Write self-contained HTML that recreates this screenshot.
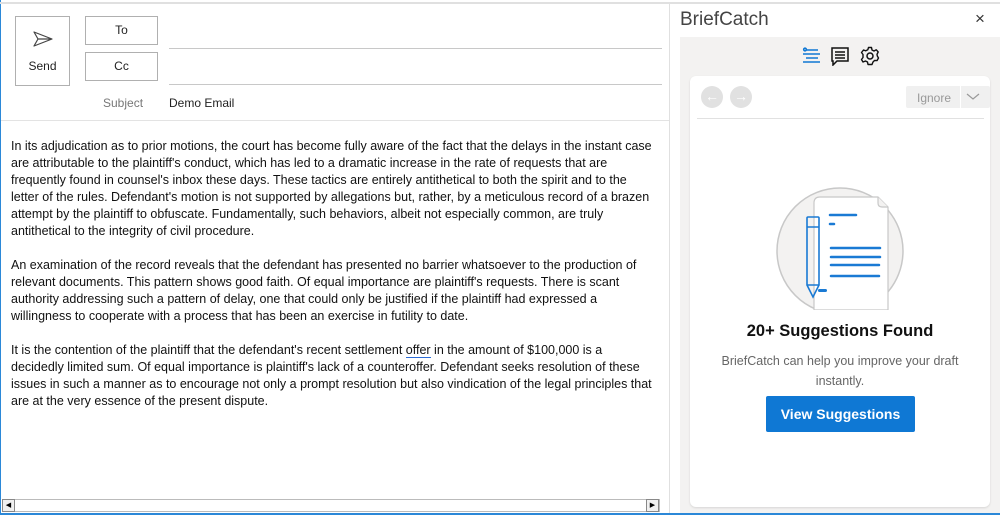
<!DOCTYPE html>
<html><head><style>
*{margin:0;padding:0;box-sizing:border-box}
body{width:1000px;height:515px;overflow:hidden;background:#fff;font-family:"Liberation Sans",sans-serif;position:relative}
.abs{position:absolute}
.btn{position:absolute;border:1px solid #b0b0b0;background:#fff;font-size:12px;color:#222;text-align:center}
.line{position:absolute;height:1px;background:#c8c8c8}
.body p{font-size:12.5px;line-height:17px;color:#111;margin-bottom:17px;white-space:nowrap}
</style></head><body>
<div class="abs" style="left:0;top:0;width:1px;height:515px;background:#2b88d8"></div>
<div class="abs" style="left:0;top:513px;width:1000px;height:2px;background:#2b88d8"></div>
<div class="abs" style="left:0;top:2px;width:1000px;height:2px;background:#e0e0e0"></div>

<div class="btn" style="left:15px;top:16px;width:55px;height:70px">
<svg class="abs" style="left:16px;top:13px" width="22" height="18" viewBox="0 0 22 18"><path d="M2 2 L20 9 L2 16 L6 9 Z M6 9 H20" fill="none" stroke="#444" stroke-width="1.2" stroke-linejoin="round"/></svg>
<div class="abs" style="left:0;width:53px;top:42px">Send</div></div>
<div class="btn" style="left:85px;top:16px;width:73px;height:29px;line-height:27px">To</div>
<div class="btn" style="left:85px;top:52px;width:73px;height:29px;line-height:27px">Cc</div>
<div class="line" style="left:169px;top:48px;width:493px"></div>
<div class="line" style="left:169px;top:84px;width:493px"></div>
<div class="abs" style="left:103px;top:96px;font-size:12px;color:#777">Subject</div>
<div class="abs" style="left:169px;top:96px;font-size:12px;color:#222">Demo Email</div>
<div class="line" style="left:1px;top:120px;width:668px;background:#e3e3e3"></div>

<div class="abs body" style="left:11px;top:138px;width:650px">
<p>In its adjudication as to prior motions, the court has become fully aware of the fact that the delays in the instant case<br>are attributable to the plaintiff's conduct, which has led to a dramatic increase in the rate of requests that are<br>frequently found in counsel's inbox these days. These tactics are entirely antithetical to both the spirit and to the<br>letter of the rules. Defendant's motion is not supported by allegations but, rather, by a meticulous record of a brazen<br>attempt by the plaintiff to obfuscate. Fundamentally, such behaviors, albeit not especially common, are truly<br>antithetical to the integrity of civil procedure.</p>
<p>An examination of the record reveals that the defendant has presented no barrier whatsoever to the production of<br>relevant documents. This pattern shows good faith. Of equal importance are plaintiff's requests. There is scant<br>authority addressing such a pattern of delay, one that could only be justified if the plaintiff had expressed a<br>willingness to cooperate with a process that has been an exercise in futility to date.</p>
<p>It is the contention of the plaintiff that the defendant's recent settlement <span style="border-bottom:1px solid #2b6cd8">offer</span> in the amount of $100,000 is a<br>decidedly limited sum. Of equal importance is plaintiff's lack of a counteroffer. Defendant seeks resolution of these<br>issues in such a manner as to encourage not only a prompt resolution but also vindication of the legal principles that<br>are at the very essence of the present dispute.</p>
</div>

<div class="abs" style="left:2px;top:499px;width:658px;height:13px;border:1px solid #bbb;background:#fff"></div>
<div class="abs" style="left:2px;top:499px;width:13px;height:13px;border:1px solid #888;background:#f0f0f0;font-size:7px;line-height:11px;text-align:center">◀</div>
<div class="abs" style="left:646px;top:499px;width:13px;height:13px;border:1px solid #888;background:#f0f0f0;font-size:7px;line-height:11px;text-align:center">▶</div>
<div class="abs" style="left:669px;top:4px;width:1px;height:509px;background:#e0e0e0"></div>

<div class="abs" style="left:680px;top:9px;font-size:19px;color:#444">BriefCatch</div>
<div class="abs" style="left:975px;top:9px;font-size:17px;color:#333">×</div>
<div class="abs" style="left:680px;top:37px;width:320px;height:476px;background:#f3f2f1"></div>
<svg class="abs" style="left:802px;top:47px" width="20" height="18" viewBox="0 0 20 18"><g stroke="#0f78d4" stroke-width="1.6" fill="none"><path d="M4 3 H16 M1 7 H18 M4 11 H16 M1 15 H18"/><circle cx="3" cy="2.5" r="1.3"/></g></svg>
<svg class="abs" style="left:830px;top:46px" width="20" height="20" viewBox="0 0 20 20"><path d="M2 2 H18 V15 H7 L3 19 V15 H2 Z M5 6 H15 M5 9 H15 M5 12 H15" fill="none" stroke="#111" stroke-width="1.5"/></svg>
<svg class="abs" style="left:860px;top:46px" width="20" height="20" viewBox="0 0 20 20"><circle cx="10" cy="10" r="3" fill="none" stroke="#111" stroke-width="1.5"/><path d="M8.5 1.5 H11.5 L12 4 L14 5 L16.3 3.8 L18.2 6 L17 8.3 L17.3 10 L18.5 12 L17 14.6 L14.5 14.5 L13 16 L12 18.5 H8 L7.5 16 L5.5 15 L3 16 L1.5 13.5 L3 11.5 V8.5 L1.5 6.5 L3.5 4 L5.8 4.8 L7.8 3.8 Z" fill="none" stroke="#111" stroke-width="1.4" stroke-linejoin="round"/></svg>

<div class="abs" style="left:690px;top:76px;width:300px;height:431px;background:#fff;border-radius:6px;box-shadow:0 1px 2px rgba(0,0,0,.12)"></div>
<div class="abs" style="left:701px;top:86px;width:22px;height:22px;border-radius:50%;background:#e1e1e1;color:#fff;font-size:14px;text-align:center;line-height:21px">←</div>
<div class="abs" style="left:730px;top:86px;width:22px;height:22px;border-radius:50%;background:#e1e1e1;color:#fff;font-size:14px;text-align:center;line-height:21px">→</div>
<div class="abs" style="left:906px;top:86px;width:84px;height:22px;background:#f0f0f0;border-radius:2px"></div>
<div class="abs" style="left:917px;top:91px;font-size:12px;color:#999">Ignore</div>
<div class="abs" style="left:960px;top:86px;width:1px;height:22px;background:#fff"></div>
<svg class="abs" style="left:966px;top:93px" width="14" height="8"><path d="M1 1 L7 6 L13 1" fill="none" stroke="#999" stroke-width="1.2"/></svg>
<div class="line" style="left:697px;top:118px;width:287px;background:#e1e1e1"></div>

<svg class="abs" style="left:770px;top:185px" width="140" height="125" viewBox="0 0 140 125">
<circle cx="70" cy="66" r="63" fill="#f3f2f1" stroke="#c8c8c8" stroke-width="1.5"/>
<path d="M44 18 Q44 12 50 12 H108 L118 22 V125 H44 Z" fill="#fff" stroke="#c8c8c8" stroke-width="1.2"/>
<path d="M108 12 V18 Q108 22 112 22 H118" fill="#f3f2f1" stroke="#c8c8c8" stroke-width="1.2"/>
<g stroke="#1a7ad4" stroke-width="2.5" stroke-linecap="round"><path d="M60 30 H86 M60 39 H64 M61 63 H110 M61 72 H110 M61 80 H109 M61 91 H109"/></g>
<g fill="none" stroke="#1a7ad4" stroke-width="1.6"><path d="M37 33 Q37 32 38 32 H48 Q49 32 49 33 V100 L43 112 L37 100 Z M37 42 H49 M37 100 H49"/></g>
</svg>
<div class="abs" style="left:818px;top:289px;width:9px;height:3px;background:#1a7ad4;border-radius:2px"></div>

<div class="abs" style="left:690px;top:322px;width:300px;text-align:center;font-size:16.5px;font-weight:bold;color:#111">20+ Suggestions Found</div>
<div class="abs" style="left:705px;top:351px;width:270px;text-align:center;font-size:12.5px;line-height:20px;color:#666">BriefCatch can help you improve your draft instantly.</div>
<div class="abs" style="left:766px;top:396px;width:149px;height:36px;background:#0f78d4;border-radius:2px;color:#fff;font-size:14px;font-weight:bold;text-align:center;line-height:36px">View Suggestions</div>
</body></html>
